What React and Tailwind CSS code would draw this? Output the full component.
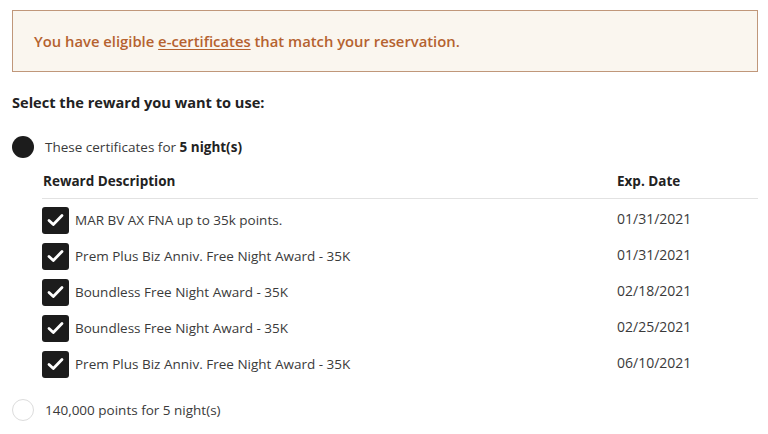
import React from 'react';

const rows = [
  { desc: 'MAR BV AX FNA up to 35k points.', date: '01/31/2021' },
  { desc: 'Prem Plus Biz Anniv. Free Night Award - 35K', date: '01/31/2021' },
  { desc: 'Boundless Free Night Award - 35K', date: '02/18/2021' },
  { desc: 'Boundless Free Night Award - 35K', date: '02/25/2021' },
  { desc: 'Prem Plus Biz Anniv. Free Night Award - 35K', date: '06/10/2021' },
];

// checkmark box
const CheckBox = () => (
  <span className="w-[27px] h-[27px] rounded-[3px] bg-[#1c1c1c] flex items-center justify-center shrink-0">
    <svg width="17" height="14" viewBox="0 0 17 14" fill="none">
      <path d="M2 7.5 L6.3 11.5 L15 2.5" stroke="#fff" strokeWidth="2.8" strokeLinecap="round" strokeLinejoin="round" />
    </svg>
  </span>
);

export default function App() {
  return (
    <div className="w-[768px] h-[434px] bg-white overflow-hidden pt-[10px] px-[12px]" style={{ fontFamily: '"Open Sans", Lato, sans-serif' }}>
      <div className="h-[62px] border border-[#c0977a] bg-[#faf6ef] flex items-center pl-[21px] mr-[-2px]">
        <p className="text-[14.8px] font-semibold text-[#b5622f]">
          You have eligible <span className="underline underline-offset-2">e-certificates</span> that match your reservation.
        </p>
      </div>

      <h2 className="mt-[20px] text-[14.6px] font-bold text-[#222]">Select the reward you want to use:</h2>

      <div className="mt-[22px] flex items-center gap-[11px]">
        <span className="w-[22px] h-[22px] rounded-full bg-[#1c1c1c]" />
        <span className="text-[13.5px] text-[#3a3a3a]">
          These certificates for <span className="font-bold text-[#222]">5 night(s)</span>
        </span>
      </div>

      <div className="ml-[30px] mr-[-2px] mt-[11px]">
        <div className="flex items-center h-[30px] border-b border-[#e2e2e2] pb-[4px] text-[13.5px] font-bold text-[#222]">
          <span className="pl-[1px] flex-1">Reward Description</span>
          <span className="w-[141px]">Exp. Date</span>
        </div>
        <div className="pt-[8px] flex flex-col gap-[9px]">
          {rows.map((r, i) => (
            <div key={i} className="flex items-center h-[27px]">
              <CheckBox />
              <span className="flex-1 pl-[6px] text-[13.5px] text-[#3a3a3a]">{r.desc}</span>
              <span className="w-[141px] text-[14px] text-[#3a3a3a] -mt-[3px]">{r.date}</span>
            </div>
          ))}
        </div>
      </div>

      <div className="mt-[21px] flex items-center gap-[11px]">
        <span className="w-[22px] h-[22px] rounded-full border border-[#dcdcdc]" />
        <span className="text-[13.5px] text-[#3a3a3a]">140,000 points for 5 night(s)</span>
      </div>
    </div>
  );
}
